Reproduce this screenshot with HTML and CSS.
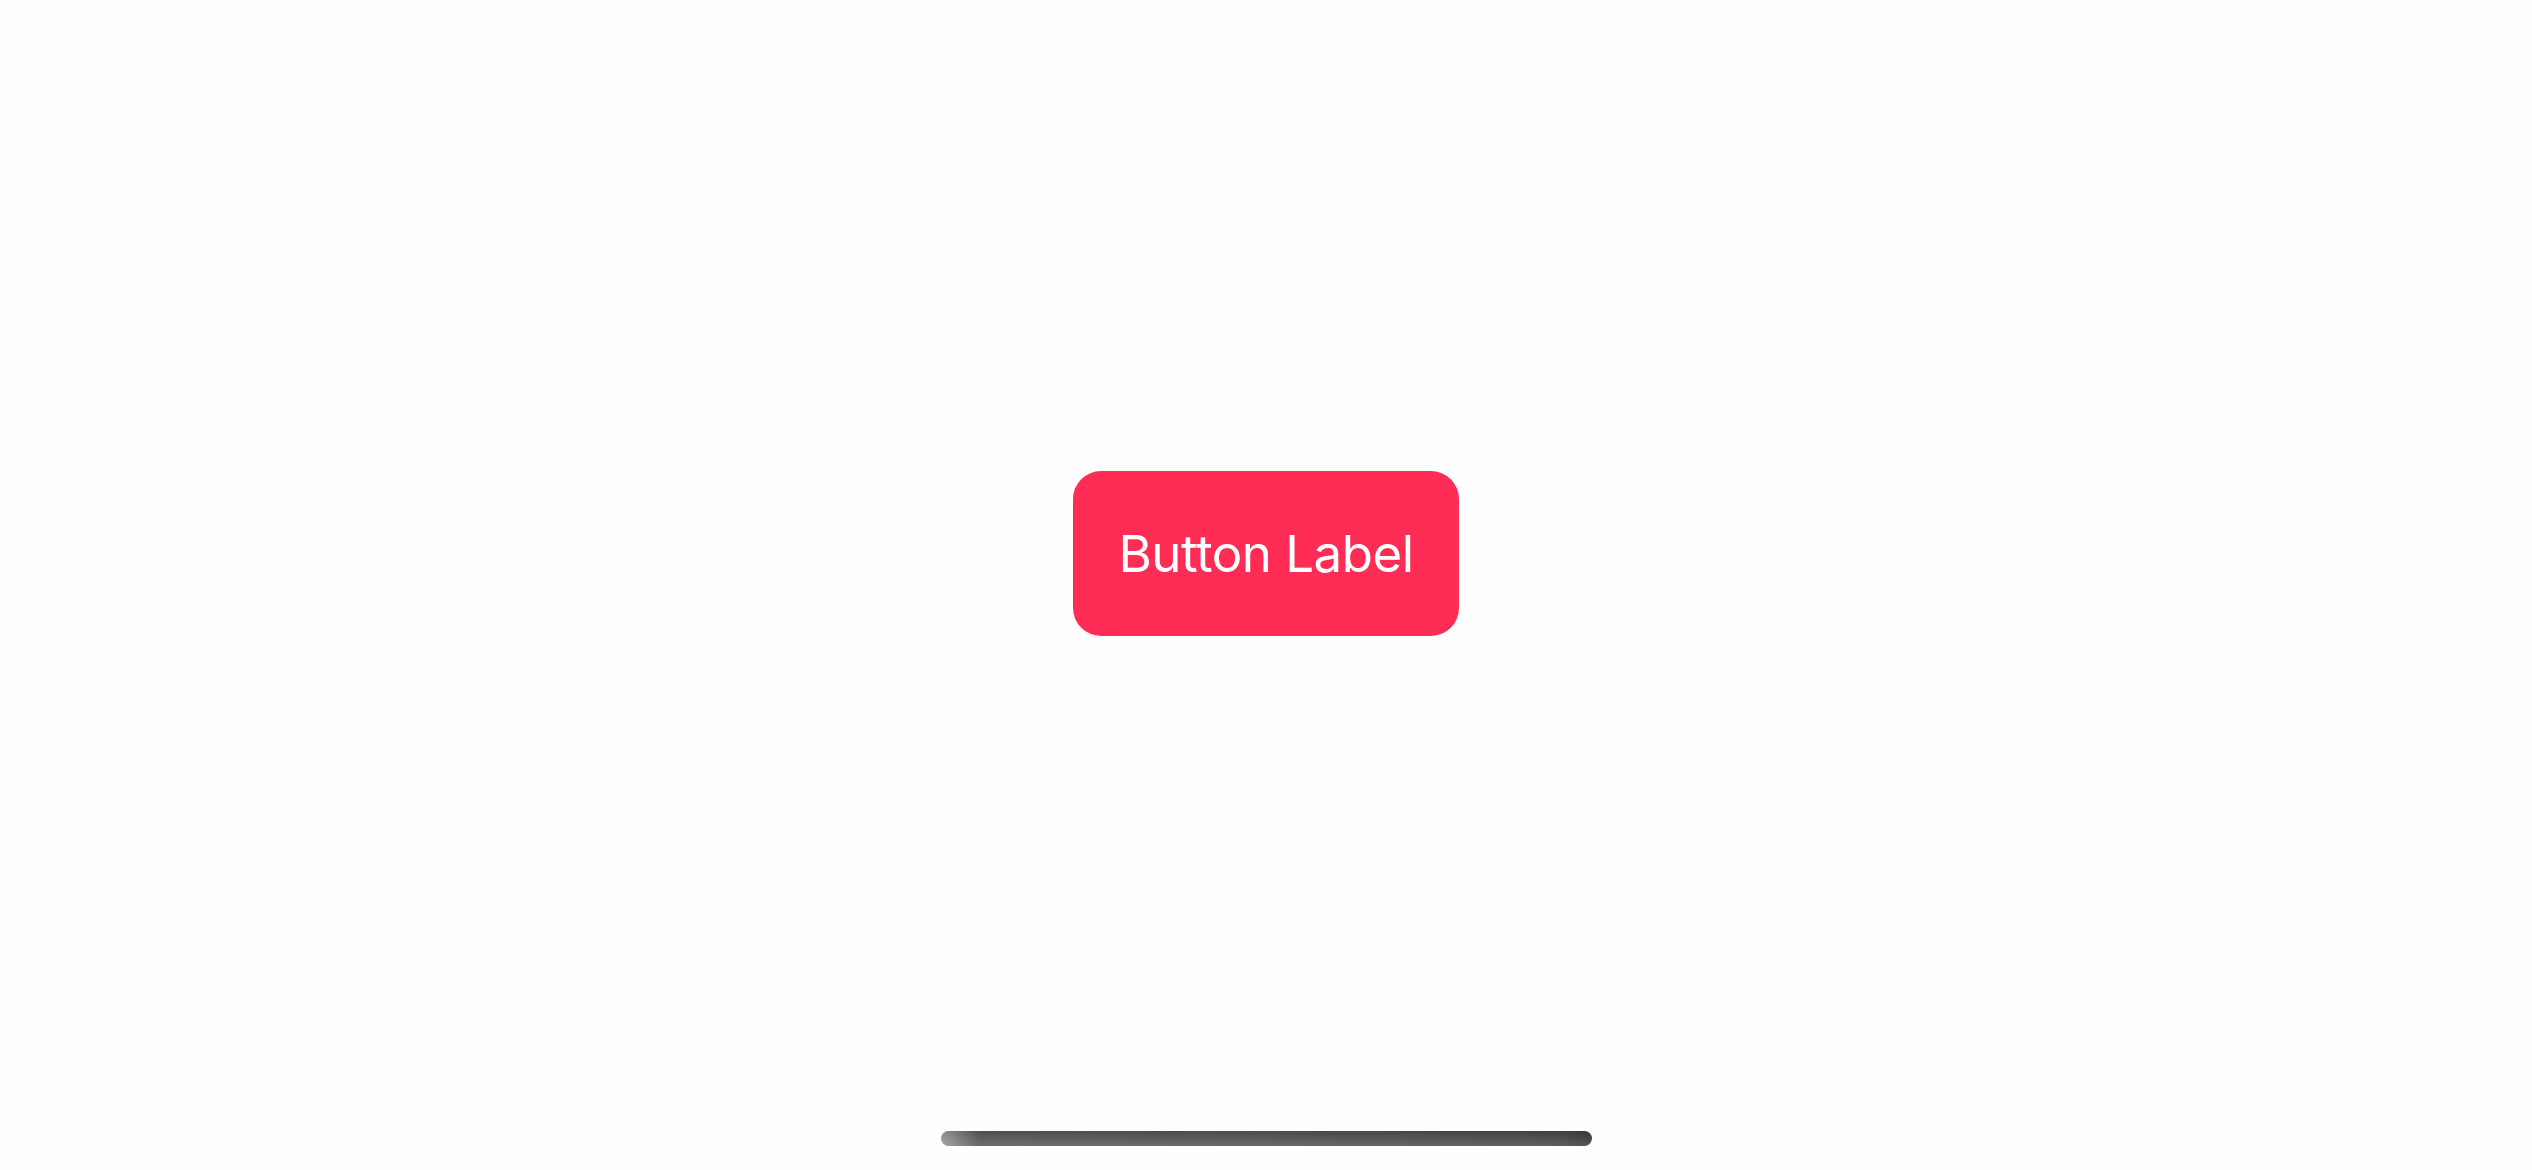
FILE: index.html
```html
<!DOCTYPE html>
<html lang="en">
<head>
<meta charset="utf-8">
<title>Button</title>
<link rel="stylesheet" href="styles.css">
</head>
<body>
<div class="screen">
  <main class="content">
    <button class="btn" type="button">Button Label</button>
  </main>
  <div class="home-area">
    <div class="home-indicator"></div>
  </div>
</div>
</body>
</html>
```
FILE: styles.css
```css
html, body {
  margin: 0;
  padding: 0;
  background: #fefefe;
}
.screen {
  width: 2532px;
  height: 1170px;
  display: flex;
  flex-direction: column;
}
.content {
  height: 1107px;
  display: flex;
  align-items: center;
  justify-content: center;
}
.btn {
  width: 386px;
  height: 165px;
  border: none;
  border-radius: 28px;
  background: #ff2d55;
  color: #ffffff;
  font-family: Inter, "Noto Sans", sans-serif;
  font-size: 51px;
  font-weight: 400;
  letter-spacing: -0.5px;
  padding: 0;
  display: flex;
  align-items: center;
  justify-content: center;
}
.home-area {
  flex: 1;
  display: flex;
  justify-content: center;
  padding-top: 24px;
  padding-left: 1px;
}
.home-indicator {
  width: 651px;
  height: 15px;
  border-radius: 8px;
  background:
    linear-gradient(to bottom, rgba(0,0,0,0.12), rgba(255,255,255,0.12)),
    linear-gradient(100deg, #a2a2a2 0%, #5a5a5a 6%, #555555 50%, #4a4a4a 94%, #3c3c3c 100%);
}
```
